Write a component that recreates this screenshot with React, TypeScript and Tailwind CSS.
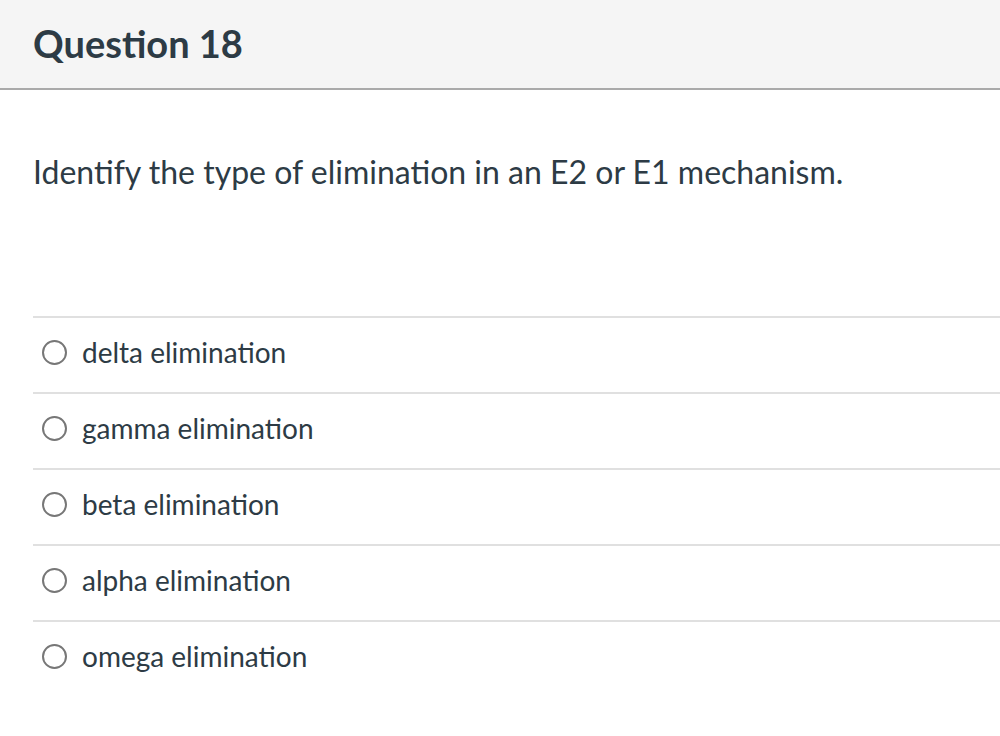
const answers = [
  "delta elimination",
  "gamma elimination",
  "beta elimination",
  "alpha elimination",
  "omega elimination",
];

export default function App() {
  return (
    <div className="w-[1000px] h-[736px] bg-white text-[#2d3b45] font-['Lato',sans-serif] overflow-hidden">
      <div className="h-[90px] bg-[#f5f5f5] border-b-2 border-[#aaaaaa] flex items-center pl-[33px] pb-[2px]">
        <h2 className="text-[38px] font-bold leading-none">Question 18</h2>
      </div>

      <div className="pl-[33px]">
        <p className="text-[32px] leading-none mt-[66px]">
          Identify the type of elimination in an E2 or E1 mechanism.
        </p>

        <div className="mt-[128px]">
          {answers.map((a) => (
            <label
              key={a}
              className="flex items-center h-[76px] gap-[15px] pl-[9px] pb-[6px] border-t-2 border-[#e0e0e0]"
            >
              <span className="w-[25px] h-[25px] rounded-full border-2 border-[#777777] bg-white shrink-0" />
              <span className="text-[28px] leading-none">{a}</span>
            </label>
          ))}
        </div>
      </div>
    </div>
  );
}
